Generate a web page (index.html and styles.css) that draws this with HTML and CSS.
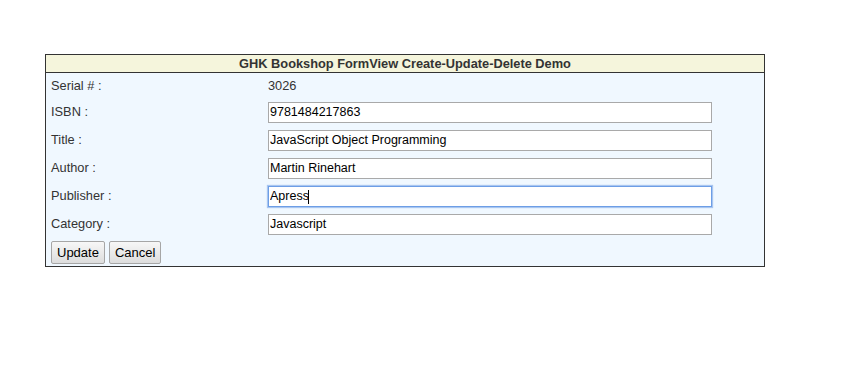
FILE: index.html
```html
<!DOCTYPE html>
<html>
<head>
<meta charset="utf-8">
<link rel="stylesheet" href="styles.css">
</head>
<body>
<div class="page">
  <div class="formview">
    <div class="header">GHK Bookshop FormView Create-Update-Delete Demo</div>
    <div class="body">
      <div class="row row-serial">
        <div class="label">Serial # :</div>
        <div class="value">3026</div>
      </div>
      <div class="row">
        <div class="label">ISBN :</div>
        <div class="value"><input class="field" type="text" value="9781484217863"></div>
      </div>
      <div class="row">
        <div class="label">Title :</div>
        <div class="value"><input class="field" type="text" value="JavaScript Object Programming"></div>
      </div>
      <div class="row">
        <div class="label">Author :</div>
        <div class="value"><input class="field" type="text" value="Martin Rinehart"></div>
      </div>
      <div class="row">
        <div class="label">Publisher :</div>
        <div class="value"><span class="caret-wrap"><input class="field focused" type="text" value="Apress"><span class="caret"></span></span></div>
      </div>
      <div class="row">
        <div class="label">Category :</div>
        <div class="value"><input class="field" type="text" value="Javascript"></div>
      </div>
      <div class="buttons">
        <button class="btn" type="button">Update</button>
        <button class="btn" type="button">Cancel</button>
      </div>
    </div>
  </div>
</div>
</body>
</html>
```
FILE: styles.css
```css
html, body {
  margin: 0;
  padding: 0;
  background: #ffffff;
}
body {
  font-family: "Liberation Sans", Arial, sans-serif;
  font-size: 12.8px;
  color: #333333;
}
.page {
  padding: 54px 0 0 45px;
}
.formview {
  width: 718px;
  border: 1px solid #333333;
  background: #f0f8ff;
}
.header {
  background: #f5f5dc;
  border-bottom: 1px solid #333333;
  text-align: center;
  font-weight: bold;
  font-size: 12.8px;
  height: 17px;
  line-height: 17px;
  color: #333333;
}
.body {
  padding: 0 0 0 5px;
}
.row {
  display: grid;
  grid-template-columns: 217px 444px;
  height: 28px;
  align-items: center;
}
.row-serial {
  height: 24px;
  padding-top: 1px;
}
.label {
  font-size: 12.8px;
  line-height: 14px;
}
.value {
  font-size: 12.8px;
  line-height: 14px;
  color: #333333;
}
.field {
  box-sizing: border-box;
  width: 444px;
  height: 21px;
  margin: 0;
  padding: 1px 1px;
  border: 1px solid #a9a9a9;
  font-family: "Liberation Sans", Arial, sans-serif;
  font-size: 12.5px;
  color: #000000;
  background: #ffffff;
  outline: none;
  display: block;
}
.field.focused {
  border: 1px solid #6d9ee6;
  box-shadow: 0 0 1px 1px #a9c6f0;
}
.caret-wrap {
  position: relative;
  display: block;
  width: 444px;
}
.caret {
  position: absolute;
  left: 40px;
  top: 4px;
  width: 1px;
  height: 14px;
  background: #000000;
}
.buttons {
  display: flex;
  gap: 4px;
  padding: 3px 0 2px 0;
}
.btn {
  font-family: "Liberation Sans", Arial, sans-serif;
  font-size: 13px;
  color: #000000;
  height: 23px;
  padding: 0 5px;
  margin: 0;
  border: 1px solid #a6a6a6;
  border-radius: 2px;
  background: linear-gradient(#f7f7f7, #dddddd);
}
```
